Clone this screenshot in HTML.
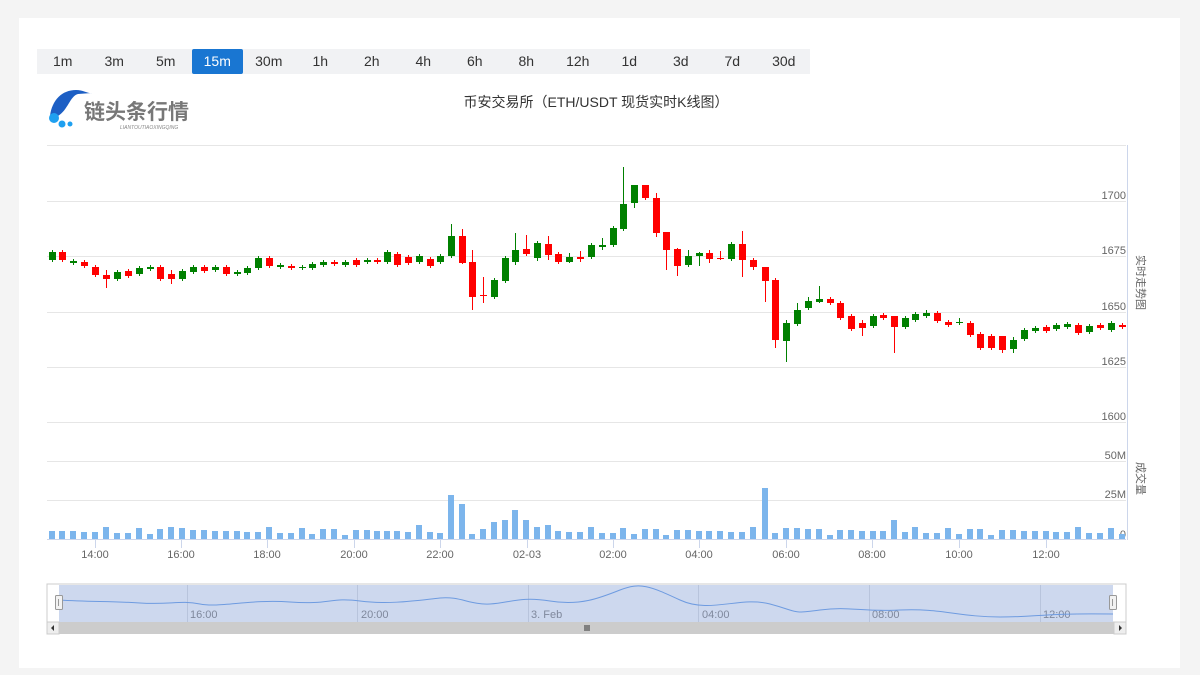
<!DOCTYPE html>
<html><head><meta charset="utf-8"><style>
body{margin:0;background:#f4f4f4;width:1200px;height:675px;overflow:hidden;font-family:"Liberation Sans","Noto Sans CJK SC",sans-serif}
.panel{position:absolute;left:19px;top:18px;width:1161px;height:650px;background:#fff}
.btns{position:absolute;left:37px;top:49px;height:25px;display:flex;background:#f1f2f4}
.btns div{width:51.5px;text-align:center;line-height:25px;font-size:14px;color:#333}
.btns .a{background:#1976d2;color:#fff;border-radius:2px}
svg{position:absolute;left:0;top:0}
</style></head><body>
<div class="panel"></div>
<div class="btns"><div>1m</div><div>3m</div><div>5m</div><div class="a">15m</div><div>30m</div><div>1h</div><div>2h</div><div>4h</div><div>6h</div><div>8h</div><div>12h</div><div>1d</div><div>3d</div><div>7d</div><div>30d</div></div>
<svg id="s" width="1200" height="675" xmlns="http://www.w3.org/2000/svg" font-family="Liberation Sans, Noto Sans CJK SC, sans-serif">
<path d="M50 116 C52 100 62 90 76 90 C84 90 88 94 92 93 L78 94 C70 96 68 110 58 116 Z" fill="#1d5fc4"/>
<circle cx="54" cy="118" r="5" fill="#1fa0f0"/><circle cx="62" cy="124" r="3.5" fill="#1fa0f0"/><circle cx="70" cy="124" r="2.5" fill="#1fa0f0"/>
<text x="84" y="119" font-size="21" font-weight="bold" fill="#777">链头条行情</text>
<text x="120" y="129" font-size="5" fill="#888" font-style="italic">LIANTOUTIAOXINGQING</text>
<text x="596" y="107" font-size="14" fill="#333" text-anchor="middle">币安交易所（ETH/USDT 现货实时K线图）</text>
<g id="g"></g>
</svg>
<script>
var g=document.getElementById('g'),h='';
function L(x1,y1,x2,y2,c,w){h+='<line x1="'+x1+'" y1="'+y1+'" x2="'+x2+'" y2="'+y2+'" stroke="'+c+'" stroke-width="'+(w||1)+'"/>';}
function T(x,y,t,s,c,a){h+='<text x="'+x+'" y="'+y+'" font-size="'+s+'" fill="'+c+'" text-anchor="'+(a||'start')+'">'+t+'</text>';}
[145,201,256,312,367,422,461,500].forEach(function(y){L(47,y+.5,1126,y+.5,'#e6e6e6');});
L(47,539.5,1126,539.5,'#ccd6eb');L(1127.5,145,1127.5,540,'#ccd6eb');
[[1700,195],[1675,250],[1650,306],[1625,361],[1600,416],['50M',455],['25M',494],['0',534]].forEach(function(a){T(1126,a[1]+4,a[0],11,'#666','end');});
h+='<text transform="translate(1137,255) rotate(90)" font-size="11" fill="#666">实时走势图</text>';
h+='<text transform="translate(1137,462) rotate(90)" font-size="11" fill="#666">成交量</text>';
[[95,'14:00'],[181,'16:00'],[267,'18:00'],[354,'20:00'],[440,'22:00'],[527,'02-03'],[613,'02:00'],[699,'04:00'],[786,'06:00'],[872,'08:00'],[959,'10:00'],[1046,'12:00']].forEach(function(a){L(a[0]+.5,540,a[0]+.5,548,'#ccd6eb');T(a[0],558,a[1],11,'#666','middle');});
var c=[[52,'g',252,260],[62,'r',252,260],[73,'g',261,263],[84,'r',262,266],[95,'r',267,275],[106,'r',275,279,270,288],[117,'g',272,279],[128,'r',271,276],[139,'g',268,274],[150,'g',267,269],[160,'r',267,279],[171,'r',274,279,270,284],[182,'g',271,279],[193,'g',267,272],[204,'r',267,271],[215,'g',267,270],[226,'r',267,274],[237,'g',272,274],[247,'g',268,273],[258,'g',258,268],[269,'r',258,266],[280,'g',265,267],[291,'r',266,268],[302,'g',267,268],[312,'g',264,268],[323,'g',262,265],[334,'r',262,264],[345,'g',262,265],[356,'r',260,265],[367,'g',260,262],[377,'r',260,262],[387,'g',252,262],[397,'r',254,265],[408,'r',257,263],[419,'g',256,262],[430,'r',259,266],[440,'g',256,262],[451,'g',236,256,224,258],[462,'r',236,263,229,264],[472,'r',262,297,250,310],[483,'r',295,296,277,303],[494,'g',280,297],[505,'g',258,281],[515,'g',250,262,233,265],[526,'r',249,254,235,256],[537,'g',243,258,241,261],[548,'r',244,255,236,260],[558,'r',254,262],[569,'g',257,262,253,263],[580,'r',257,259,251,262],[591,'g',245,257],[602,'g',245,247,238,250],[613,'g',228,245],[623,'g',204,229,167,231],[634,'g',185,203,185,208],[645,'r',185,198,185,200],[656,'r',198,233,193,237],[666,'r',232,250,232,270],[677,'r',249,266,248,276],[688,'g',256,265,250,267],[699,'g',253,256,252,266],[709,'r',253,259,250,263],[720,'r',258,259,251,260],[731,'g',244,259],[742,'r',244,260,231,277],[753,'r',260,267,258,270],[765,'r',267,281,267,302],[775,'r',280,340,278,348],[786,'g',323,341,320,362],[797,'g',310,324,303,326],[808,'g',301,308,297,310],[819,'g',299,302,286,303],[830,'r',299,303],[840,'r',303,318],[851,'r',316,329],[862,'r',323,328,320,336],[873,'g',316,326],[883,'r',315,318],[894,'r',316,327,316,353],[905,'g',318,327],[915,'g',314,320],[926,'g',313,316,310,318],[937,'r',313,321],[948,'r',322,325],[959,'g',322,323,318,325],[970,'r',323,335],[980,'r',334,348],[991,'r',336,348],[1002,'r',336,350,336,353],[1013,'g',340,349,337,353],[1024,'g',330,339],[1035,'g',328,331],[1046,'r',327,331],[1056,'g',325,329],[1067,'g',324,327],[1078,'r',325,333],[1089,'g',326,332],[1100,'r',325,328],[1111,'g',323,330],[1122,'r',325,327]];
var vo={451:495,462:504,473:456,484:510,494:522,505:520,515:510,526:520,537:527,548:525,624:453,635:513,646:525,657:512,668:492,679:518,744:510,765:488,776:497,787:504,797:528,894:520,874:524,104:526,171:527,182:528,419:525,430:532};
c.forEach(function(k,i){var col=k[1]=='g'?'#008000':'#ff0000';var hi=k[4]||k[2]-2,lo=k[5]||k[3]+2;
L(k[0]+.5,hi,k[0]+.5,lo,col);h+='<rect x="'+(k[0]-3)+'" y="'+k[2]+'" width="7" height="'+Math.max(1,k[3]-k[2])+'" fill="'+col+'"/>';
var vy=vo[k[0]]||(531+((i*7)%5)-(i%3)*2);h+='<rect x="'+(k[0]-3)+'" y="'+vy+'" width="6" height="'+(539-vy)+'" fill="#7cb5ec"/>';});
h+='<rect x="47" y="584" width="1079" height="38" fill="#fff" stroke="#ccc"/>';
h+='<rect x="59" y="585" width="1054" height="37" fill="#cdd8ee"/>';
[187,357,528,698,869,1040].forEach(function(x){L(x+.5,585,x+.5,622,'#b8c4dc');});
[[190,'16:00'],[361,'20:00'],[531,'3. Feb'],[702,'04:00'],[872,'08:00'],[1043,'12:00']].forEach(function(a){T(a[0],618,a[1],11,'#7f889c');});
h+='<path d="M59 600 C90 602 110 601 140 603 S180 600 200 604 S250 599 290 602 S330 597 360 601 S420 600 440 598 S470 605 490 604 S520 596 550 601 S600 598 620 590 S650 586 680 600 S740 596 770 604 S790 614 820 610 S860 612 900 610 S960 617 1000 617 S1040 613 1113 614" fill="none" stroke="#6e9be0" stroke-width="1"/>';
h+='<rect x="47" y="622" width="1079" height="12" fill="#ccc"/><rect x="47" y="622" width="12" height="12" fill="#eee" stroke="#ccc"/><rect x="1114" y="622" width="12" height="12" fill="#eee" stroke="#ccc"/>';
h+='<path d="M51 628 L54 625 L54 631Z M1122 628 L1119 625 L1119 631Z" fill="#333"/>';
h+='<path d="M585 625v6M587 625v6M589 625v6" stroke="#333"/>';
h+='<rect x="55.5" y="595.5" width="7" height="14" rx="1" fill="#f2f2f2" stroke="#999"/><rect x="1109.5" y="595.5" width="7" height="14" rx="1" fill="#f2f2f2" stroke="#999"/>';
L(58.5,599,58.5,606,'#999');L(1112.5,599,1112.5,606,'#999');
g.innerHTML=h;
</script>
</body></html>
